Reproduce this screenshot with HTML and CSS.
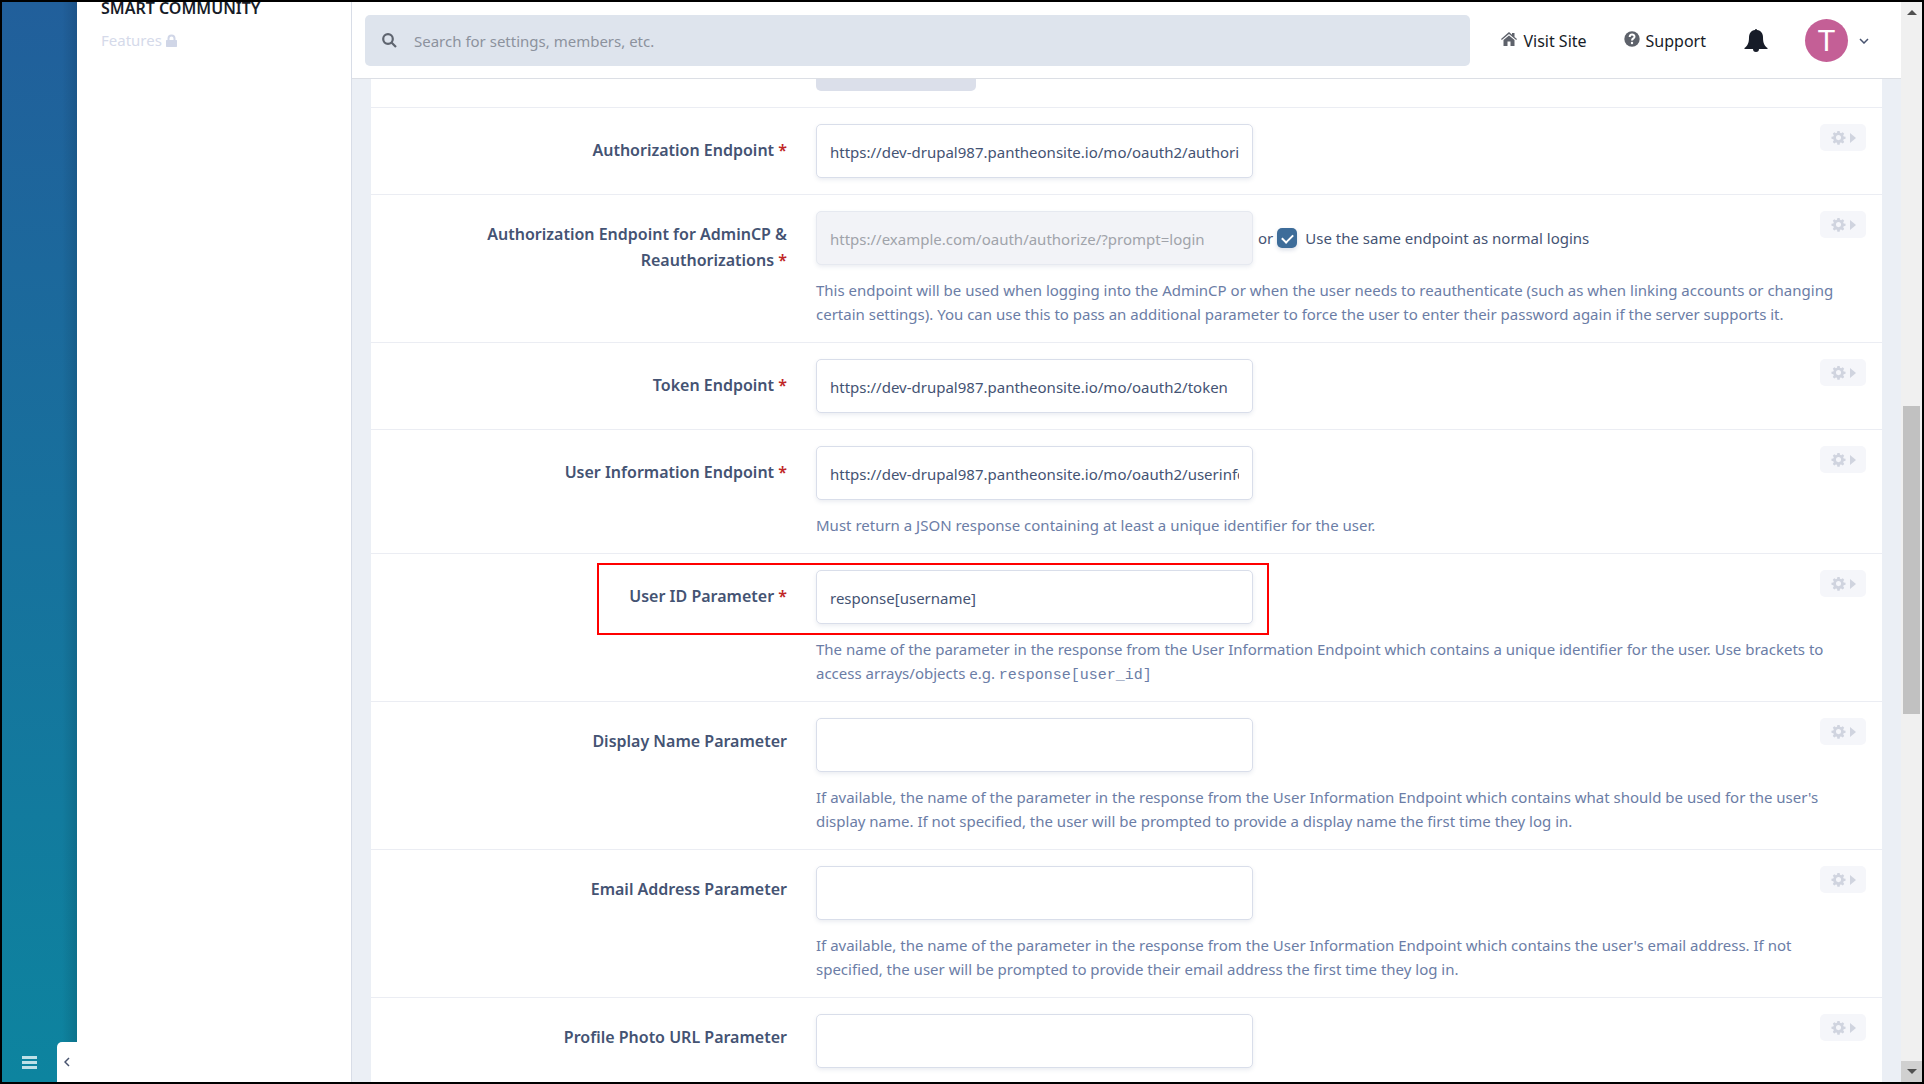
FILE: index.html
```html
<!DOCTYPE html>
<html lang="en">
<head>
    <meta charset="UTF-8">
    <meta name="viewport" content="width=device-width, initial-scale=1.0">
    <title>OAuth Settings - AdminCP</title>
    <link rel="stylesheet" href="styles.css">
</head>
<body>

<!-- Shared icons -->
<svg class="sprite" aria-hidden="true">
    <symbol id="icon-cog" viewBox="0 0 16 16">
        <path fill-rule="evenodd" d="M6.8 1h2.4l.4 2 1.2.5L12.500 2.300l1.600 1.700-1.100 1.600.5 1.200 2 .4v2.200l-2 .4-.5 1.200 1.100 1.700-1.600 1.600-1.700-1.100-1.200.5-.4 2H6.800l-.4-2-1.200-.5-1.700 1.100L1.900 12.700 3 11l-.5-1.200-2-.4V7.200l2-.4L3 5.600 1.900 4l1.600-1.700 1.700 1.200L6.400 3zM8 5.400a2.700 2.700 0 1 0 0 5.400 2.700 2.700 0 0 0 0-5.400z"/>
    </symbol>
    <symbol id="icon-caret" viewBox="0 0 6 10">
        <path d="M0 0l6 5-6 5z"/>
    </symbol>
</svg>

<div class="app">
    <nav class="rail">
        <button class="menu-button" type="button" aria-label="Menu"><span></span><span></span><span></span></button>
        <button class="collapse-button" type="button" aria-label="Collapse menu">
            <svg width="6" height="10" viewBox="0 0 6 10"><path d="M5 1L1 5l4 4"/></svg>
        </button>
    </nav>

    <aside class="submenu">
        <h3>SMART COMMUNITY</h3>
        <a href="#">Features
            <svg width="11" height="13" viewBox="0 0 11 13"><path fill-rule="evenodd" d="M1.500 6V4.500a4 4 0 0 1 8 0V6h1l.5.500v6l-.5.500H.5L0 12.500v-6L.5 6zm2 0h4V4.500a2 2 0 0 0-4 0z"/></svg>
        </a>
    </aside>

    <main class="main">
        <header class="header">
            <div class="search">
                <svg width="15" height="15" viewBox="0 0 15 15"><circle cx="6" cy="6" r="4.800"/><path d="M9.500 9.500l4.500 4.500"/></svg>
                <input type="text" placeholder="Search for settings, members, etc." aria-label="Search">
            </div>
            <a class="header-link visit" href="#">
                <svg width="16" height="14" viewBox="0 0 16 14"><path d="M8 0l3 2.700V1h2.500v4L16 7.100l-.8 1L8 2 .8 8.100l-.8-1zM8 3.400l5.500 4.700V14h-4V9.500h-3V14h-4V8.100z"/></svg>
                <span>Visit Site</span>
            </a>
            <a class="header-link support" href="#">
                <svg width="16" height="16" viewBox="0 0 16 16"><circle cx="8" cy="8" r="7.700"/><path class="mark" d="M5.700 6c0-3.200 4.800-3.100 4.800-.3C10.500 7.500 8 7.300 8 9.500"/><circle class="dot" cx="8" cy="12" r="1.200"/></svg>
                <span>Support</span>
            </a>
            <button class="bell" type="button" aria-label="Notifications">
                <svg width="24" height="26" viewBox="0 0 24 26"><path d="M11 2a1 1 0 0 1 2 0c4 .6 6 3.500 6 7.500 0 5.500 1.500 8.500 4.500 10.500v1H15a3 3 0 0 1-6 0H.5v-1C3.500 18 5 15 5 9.500 5 5.500 7 2.600 11 2z"/></svg>
            </button>
            <button class="account" type="button">
                <span class="avatar">T</span>
                <svg width="10" height="6" viewBox="0 0 10 6"><path d="M1 1l4 4 4-4"/></svg>
            </button>
        </header>

        <div class="content">
            <form class="form">
                <div class="row row-cut">
                    <div class="field"><button class="upload" type="button" aria-label="Choose"></button></div>
                </div>

                <div class="row">
                    <label class="required" for="auth">Authorization Endpoint <b>*</b></label>
                    <div class="field">
                        <input id="auth" type="text" value="https://dev-drupal987.pantheonsite.io/mo/oauth2/authorize">
                    </div>
                    <button class="options" type="button" aria-label="Options"><svg class="cog"><use href="#icon-cog"/></svg><svg class="caret"><use href="#icon-caret"/></svg></button>
                </div>

                <div class="row">
                    <label for="auth-admin">Authorization Endpoint for AdminCP &amp;<br>Reauthorizations <b>*</b></label>
                    <div class="field">
                        <div class="inline">
                            <input id="auth-admin" type="text" placeholder="https://example.com/oauth/authorize/?prompt=login" disabled>
                            <span class="or">or</span>
                            <input id="same" type="checkbox" checked>
                            <label class="check-label" for="same">Use the same endpoint as normal logins</label>
                        </div>
                        <p>This endpoint will be used when logging into the AdminCP or when the user needs to reauthenticate (such as when linking accounts or changing<br>certain settings). You can use this to pass an additional parameter to force the user to enter their password again if the server supports it.</p>
                    </div>
                    <button class="options" type="button" aria-label="Options"><svg class="cog"><use href="#icon-cog"/></svg><svg class="caret"><use href="#icon-caret"/></svg></button>
                </div>

                <div class="row">
                    <label class="required" for="token">Token Endpoint <b>*</b></label>
                    <div class="field">
                        <input id="token" type="text" value="https://dev-drupal987.pantheonsite.io/mo/oauth2/token">
                    </div>
                    <button class="options" type="button" aria-label="Options"><svg class="cog"><use href="#icon-cog"/></svg><svg class="caret"><use href="#icon-caret"/></svg></button>
                </div>

                <div class="row">
                    <label class="required" for="userinfo">User Information Endpoint <b>*</b></label>
                    <div class="field">
                        <input id="userinfo" type="text" value="https://dev-drupal987.pantheonsite.io/mo/oauth2/userinfo">
                        <p>Must return a JSON response containing at least a unique identifier for the user.</p>
                    </div>
                    <button class="options" type="button" aria-label="Options"><svg class="cog"><use href="#icon-cog"/></svg><svg class="caret"><use href="#icon-caret"/></svg></button>
                </div>

                <div class="row">
                    <label class="required" for="userid">User ID Parameter <b>*</b></label>
                    <div class="field">
                        <input id="userid" type="text" value="response[username]">
                        <p>The name of the parameter in the response from the User Information Endpoint which contains a unique identifier for the user. Use brackets to<br>access arrays/objects e.g. <code>response[user_id]</code></p>
                    </div>
                    <button class="options" type="button" aria-label="Options"><svg class="cog"><use href="#icon-cog"/></svg><svg class="caret"><use href="#icon-caret"/></svg></button>
                    <div class="highlight"></div>
                </div>

                <div class="row">
                    <label for="display-name">Display Name Parameter</label>
                    <div class="field">
                        <input id="display-name" type="text">
                        <p>If available, the name of the parameter in the response from the User Information Endpoint which contains what should be used for the user's<br>display name. If not specified, the user will be prompted to provide a display name the first time they log in.</p>
                    </div>
                    <button class="options" type="button" aria-label="Options"><svg class="cog"><use href="#icon-cog"/></svg><svg class="caret"><use href="#icon-caret"/></svg></button>
                </div>

                <div class="row">
                    <label for="email">Email Address Parameter</label>
                    <div class="field">
                        <input id="email" type="text">
                        <p>If available, the name of the parameter in the response from the User Information Endpoint which contains the user's email address. If not<br>specified, the user will be prompted to provide their email address the first time they log in.</p>
                    </div>
                    <button class="options" type="button" aria-label="Options"><svg class="cog"><use href="#icon-cog"/></svg><svg class="caret"><use href="#icon-caret"/></svg></button>
                </div>

                <div class="row">
                    <label for="photo">Profile Photo URL Parameter</label>
                    <div class="field">
                        <input id="photo" type="text">
                    </div>
                    <button class="options" type="button" aria-label="Options"><svg class="cog"><use href="#icon-cog"/></svg><svg class="caret"><use href="#icon-caret"/></svg></button>
                </div>
            </form>
        </div>
    </main>

    <div class="scrollbar">
        <span class="arrow arrow-up"></span>
        <div class="track"><div class="thumb"></div></div>
        <span class="arrow arrow-down"></span>
    </div>
</div>

</body>
</html>
```
FILE: styles.css
```css
:root {
    --text: #445373;
    --muted: #6b7da6;
    --dark: #171c28;
    --line: #ebedf3;
    --field-border: #d9deea;
    --page-bg: #ebeff5;
    --font-family: "Segoe UI", "Noto Sans", "Open Sans", sans-serif;
}

* {
    box-sizing: border-box;
}

body {
    margin: 0;
    font-family: var(--font-family);
    font-size: 15px;
    color: var(--text);
}

button,
input {
    font: inherit;
    color: inherit;
}

button {
    border: 0;
    padding: 0;
    background: none;
}

a {
    color: inherit;
    text-decoration: none;
}

.sprite {
    position: absolute;
    width: 0;
    height: 0;
}

.app {
    display: flex;
    height: 100vh;
    border: 2px solid #000;
    overflow: hidden;
}

/* Left rail */
.rail {
    display: flex;
    align-items: flex-end;
    justify-content: space-between;
    flex: 0 0 75px;
    background: linear-gradient(to right, transparent 60px, rgba(0, 0, 0, 0.12)), linear-gradient(#215f9b, #0d849f);
}

.menu-button {
    display: flex;
    flex-direction: column;
    gap: 2px;
    margin: 0 0 13px 20px;
}

.menu-button span {
    width: 15px;
    height: 3px;
    background: #bfe0e7;
}

.collapse-button {
    display: flex;
    align-items: center;
    width: 20px;
    height: 40px;
    padding-left: 7px;
    background: #fff;
    border-radius: 5px 0 0 0;
}

.collapse-button svg,
.account svg {
    fill: none;
    stroke: #48536f;
    stroke-width: 1.5;
}

.submenu {
    flex: 0 0 275px;
    padding-left: 24px;
    border-right: 1px solid #d8dde7;
    background: #fff;
}

.submenu h3 {
    margin: 0 0 16px;
    font-size: 16px;
    font-weight: 600;
    line-height: 12px;
    color: var(--dark);
}

.submenu a {
    display: block;
    line-height: 20px;
    color: #d5daea;
}

.submenu svg {
    fill: #d0d6e7;
    vertical-align: -1px;
}

/* Header */
.main {
    display: flex;
    flex-direction: column;
    flex: 1;
    min-width: 0;
}

.header {
    display: flex;
    align-items: center;
    flex: 0 0 77px;
    padding: 1px 32px 0 13px;
    border-bottom: 1px solid #dcdfe5;
    background: #fff;
    color: var(--dark);
}

.search {
    display: flex;
    align-items: center;
    flex: 1;
    gap: 17px;
    height: 51px;
    padding: 0 17px;
    border-radius: 5px;
    background: #dee4ed;
}

.search svg {
    fill: none;
    stroke: #5e646f;
    stroke-width: 2.2;
}

.search input {
    flex: 1;
    border: 0;
    padding: 0;
    background: none;
}

.search input::placeholder {
    color: #8c929d;
    opacity: 1;
}

.header-link {
    display: flex;
    align-items: center;
    gap: 6px;
    font-size: 16px;
}

.header-link svg {
    fill: #5e626b;
    margin-bottom: 4px;
}

.header-link .mark {
    fill: none;
    stroke: #fff;
    stroke-width: 2;
}

.header-link .dot {
    fill: #fff;
}

.visit {
    margin-left: 31px;
}

.support {
    margin-left: 37px;
}

.bell {
    display: flex;
    margin-left: 38px;
    fill: var(--dark);
}

.account {
    display: flex;
    align-items: center;
    gap: 11px;
    margin-left: 37px;
}

.avatar {
    width: 43px;
    height: 43px;
    border-radius: 50%;
    background: #c45f96;
    color: #fff;
    font-family: Roboto, sans-serif;
    font-size: 30px;
    line-height: 43px;
}

/* Settings form */
.content {
    flex: 1;
    min-height: 0;
    padding: 0 19px;
    background: var(--page-bg);
    overflow: hidden;
}

.form {
    min-height: 100%;
    background: #fff;
}

.row {
    position: relative;
    display: grid;
    grid-template-columns: 416px 1fr 46px;
    column-gap: 29px;
    padding: 16px 16px 16px 0;
    border-bottom: 1px solid var(--line);
}

.row:last-child {
    border-bottom: 0;
}

.row-cut {
    padding-top: 0;
}

.row-cut .field {
    grid-column: 2;
}

.upload {
    display: block;
    width: 160px;
    height: 12px;
    border-radius: 0 0 5px 5px;
    background: #dbdfea;
}

.row > label {
    padding-top: 10px;
    font-size: 16px;
    font-weight: 600;
    line-height: 26px;
    text-align: right;
}

.row > label.required {
    padding-top: 13px;
}

.row > label b {
    color: #c02626;
    font-weight: 600;
}

.field {
    min-width: 0;
}

.field input[type="text"] {
    display: block;
    width: 437px;
    height: 54px;
    padding: 1px 13px 0;
    border: 1px solid var(--field-border);
    border-radius: 5px;
    background: #fff;
    box-shadow: 0 2px 4px rgba(60, 80, 130, 0.1);
}

.field input[type="text"]:disabled {
    border-color: #e6e9f0;
    background: #f2f3f7;
}

.field input::placeholder {
    color: #a0a3aa;
    opacity: 1;
}

.inline {
    display: flex;
    align-items: center;
}

.or {
    margin: 0 4px 0 5px;
}

.inline input[type="checkbox"] {
    appearance: none;
    width: 20px;
    height: 20px;
    margin: 0 8px 0 0;
    border-radius: 5px;
    background: #3d6c99;
    box-shadow: 0 2px 4px rgba(60, 80, 130, 0.2);
}

.inline input[type="checkbox"]::before {
    content: "";
    display: block;
    width: 9px;
    height: 5px;
    margin: 6px 0 0 5px;
    border: solid #fff;
    border-width: 0 0 2px 2px;
    transform: rotate(-45deg);
}

.field p {
    margin: 13px 0 0;
    line-height: 24px;
    color: var(--muted);
    white-space: nowrap;
}

.field code {
    font-family: "Liberation Mono", monospace;
    font-size: 15px;
    line-height: 16px;
}

.options {
    display: flex;
    align-items: center;
    justify-content: center;
    gap: 4px;
    width: 46px;
    height: 27px;
    border-radius: 5px;
    background: #f5f6fa;
    fill: #d0d4df;
}

.cog {
    width: 15px;
    height: 15px;
}

.caret {
    width: 6px;
    height: 10px;
}

.highlight {
    position: absolute;
    top: 9px;
    left: 226px;
    width: 672px;
    height: 72px;
    border: 2px solid #f00;
    pointer-events: none;
}

/* Scrollbar */
.scrollbar {
    display: flex;
    flex-direction: column;
    flex: 0 0 21px;
    background: #f0f0f0;
}

.arrow {
    display: flex;
    align-items: center;
    justify-content: center;
    height: 21px;
}

.arrow::before {
    content: "";
    border: 5px solid transparent;
}

.arrow-up::before {
    border-top-width: 0;
    border-bottom-color: #505050;
}

.arrow-down {
    background: #d0d0d0;
}

.arrow-down::before {
    border-bottom-width: 0;
    border-top-color: #505050;
}

.track {
    flex: 1;
    padding: 383px 2px 0;
}

.thumb {
    height: 308px;
    background: #c1c1c1;
}
```
